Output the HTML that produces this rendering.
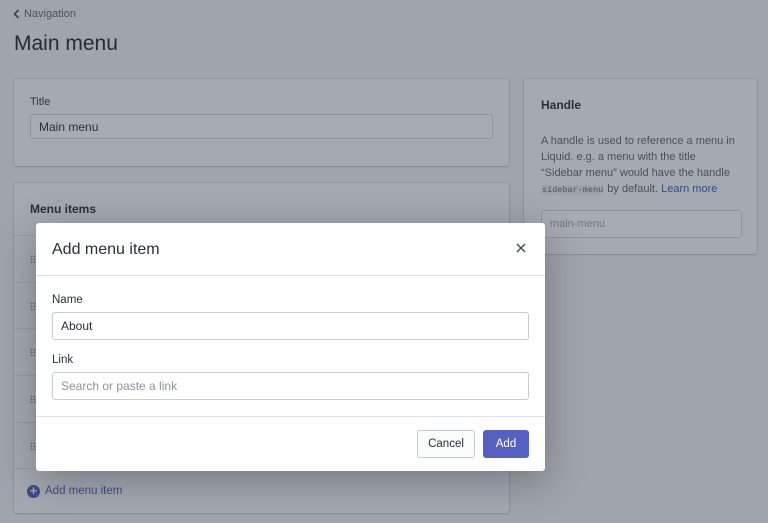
<!DOCTYPE html>
<html><head><style>
*{box-sizing:border-box;margin:0;padding:0}
body{width:768px;height:523px;overflow:hidden;background:#a0a4ac;font-family:"Liberation Sans",sans-serif;position:relative;color:#2a2f3d}
.abs{position:absolute}
.card{position:absolute;background:#a5a9b0;border-radius:3px;box-shadow:0 0 0 1px rgba(60,65,80,.12),0 1px 2px rgba(60,65,80,.15)}
.inp{position:absolute;border:1px solid #8f949d;border-radius:3px;background:#a7abb2;font-size:12px;padding-left:8px;display:flex;align-items:center}
.line{position:absolute;left:14px;width:495px;height:1px;background:#979ba3}
.hdl{position:absolute;left:30px;width:6px;height:8px;background:radial-gradient(circle,#6f7480 45%,transparent 50%) 0 0/3px 3px}
.modal{position:absolute;left:36px;top:223px;width:509px;height:248px;background:#fff;border-radius:3px;box-shadow:0 10px 40px rgba(30,35,50,.35)}
.minp{position:absolute;left:16px;width:477px;height:28px;border:1px solid #c4cdd5;border-radius:3px;font-size:12px;padding-left:8px;display:flex;align-items:center}
</style></head><body>
<svg class="abs" style="left:13px;top:9px" width="7" height="10" viewBox="0 0 7 10"><path d="M5.5 1 L1.5 5 L5.5 9" fill="none" stroke="#3a3f4c" stroke-width="1.6"/></svg>
<div class="abs" style="left:24px;top:8px;font-size:11px;color:#4c5260">Navigation</div>
<div class="abs" style="left:14px;top:32px;font-size:21px;color:#262b38">Main menu</div>

<div class="card" style="left:14px;top:79px;width:495px;height:87px"></div>
<div class="abs" style="left:30px;top:96px;font-size:11px;color:#30354a">Title</div>
<div class="inp" style="left:30px;top:114px;width:463px;height:25px;color:#2a2f3d">Main menu</div>

<div class="card" style="left:14px;top:183px;width:495px;height:330px"></div>
<div class="abs" style="left:30px;top:202px;font-size:12px;font-weight:bold;color:#2a2f3d">Menu items</div>
<div class="line" style="top:235px"></div><div class="line" style="top:282px"></div><div class="line" style="top:328px"></div><div class="line" style="top:375px"></div><div class="line" style="top:422px"></div><div class="line" style="top:468px"></div>
<div class="hdl" style="top:255px"></div><div class="hdl" style="top:302px"></div><div class="hdl" style="top:348px"></div><div class="hdl" style="top:395px"></div><div class="hdl" style="top:442px"></div>
<div class="abs" style="left:27px;top:485px;width:13px;height:13px;border-radius:50%;background:#3e4a8a;color:#a5a9b0;font-size:13px;line-height:12px;text-align:center;font-weight:bold">+</div>
<div class="abs" style="left:45px;top:485px;font-size:11.5px;color:#3e4a8a">Add menu item</div>

<div class="card" style="left:524px;top:79px;width:233px;height:175px"></div>
<div class="abs" style="left:541px;top:98px;font-size:12px;font-weight:bold;color:#2a2f3d">Handle</div>
<div class="abs" style="left:541px;top:133px;width:215px;font-size:11px;line-height:16px;color:#4a5060;white-space:nowrap">A handle is used to reference a menu in<br>Liquid. e.g. a menu with the title<br>“Sidebar menu” would have the handle<br><span style="font-family:'Liberation Mono',monospace;font-size:8.5px;background:#9ea2aa;padding:0 1px">sidebar-menu</span> by default. <span style="color:#2f4f86">Learn more</span></div>
<div class="inp" style="left:541px;top:210px;width:201px;height:28px;color:#737884;font-size:11px">main-menu</div>

<div class="modal">
<div class="abs" style="left:16px;top:18px;font-size:16px;color:#2a2f3d">Add menu item</div>
<svg class="abs" style="left:480px;top:20px" width="10" height="10" viewBox="0 0 10 10"><path d="M1 1L9 9M9 1L1 9" stroke="#4a5060" stroke-width="1.5"/></svg>
<div class="abs" style="left:0;top:52px;width:509px;height:1px;background:#dfe3e8"></div>
<div class="abs" style="left:16px;top:71px;font-size:11.5px;color:#2a2f3d">Name</div>
<div class="minp" style="top:89px;color:#2a2f3d">About</div>
<div class="abs" style="left:16px;top:131px;font-size:11.5px;color:#2a2f3d">Link</div>
<div class="minp" style="top:149px;color:#8c929c">Search or paste a link</div>
<div class="abs" style="left:0;top:193px;width:509px;height:1px;background:#dfe3e8"></div>
<div class="abs" style="left:381px;top:207px;width:58px;height:28px;border:1px solid #c4cdd5;border-radius:3px;background:#fafbfb;font-size:11.5px;display:flex;align-items:center;justify-content:center;color:#2a2f3d">Cancel</div>
<div class="abs" style="left:447px;top:207px;width:46px;height:28px;border-radius:3px;background:#5660c0;font-size:11.5px;display:flex;align-items:center;justify-content:center;color:#fff">Add</div>
</div>
</body></html>
